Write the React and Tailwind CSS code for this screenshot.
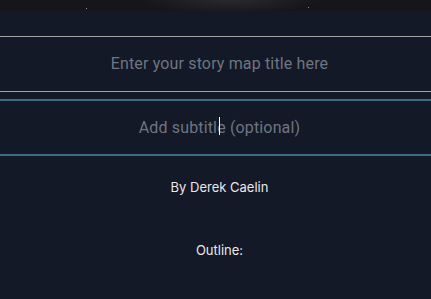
import React from "react";

export default function App() {
  return (
    <div className="w-[431px] h-[299px] overflow-hidden bg-[#131926] flex flex-col" style={{ fontFamily: "Roboto, 'Noto Sans', sans-serif" }}>
      <div className="relative h-[11px] shrink-0 bg-[#161519] bg-[radial-gradient(ellipse_90px_14px_at_230px_0px,#2a292e,#161519)]">
        <span className="absolute left-[86px] top-[8px] w-px h-px bg-[#9a9a9a]" />
        <span className="absolute left-[308px] top-[7px] w-px h-px bg-[#8a8a8a]" />
      </div>
      <div className="h-[25px] shrink-0" />
      <div className="h-[56px] border-y border-[#a3a3a3] flex items-center justify-center pl-[8px]">
        <input
          className="w-full bg-transparent outline-none text-center text-[16px] tracking-[0.15px] text-[#e5e7eb] placeholder:text-[#6f7580] caret-transparent"
          placeholder="Enter your story map title here"
        />
      </div>
      <div className="h-[7px] shrink-0" />
      <div className="relative h-[57px] border-y-2 border-[#3e6a8a] flex items-center justify-center pl-[8px]">
        <input
          className="w-full bg-transparent outline-none text-center text-[16px] tracking-[0.15px] text-[#e5e7eb] placeholder:text-[#6f7580] caret-transparent"
          placeholder="Add subtitle (optional)"
        />
        <span className="absolute left-[219px] top-[16px] w-px h-[18px] bg-white" />
      </div>
      <div className="flex flex-col items-center text-[13px] text-[#e8e8ea] pl-[8px]" style={{ fontFamily: "Inter, 'Liberation Sans', sans-serif" }}>
        <div className="mt-[23px] leading-[16px]">By Derek Caelin</div>
        <div className="mt-[47px] leading-[16px]">Outline:</div>
      </div>
    </div>
  );
}
